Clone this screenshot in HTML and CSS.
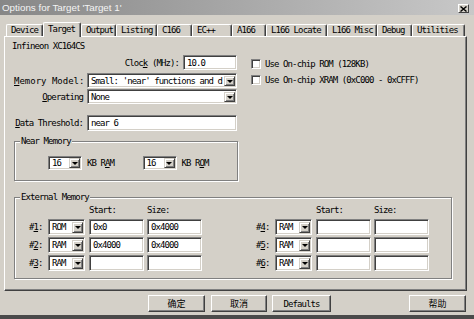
FILE: index.html
```html
<!DOCTYPE html>
<html>
<head>
<meta charset="utf-8">
<title>Options for Target</title>
<link rel="stylesheet" href="styles.css">
</head>
<body>
<div class="window">
  <div class="titlebar">
    <span class="title">Options for Target 'Target 1'</span>
    <span class="close"><svg width="7" height="6" viewBox="0 0 7 6"><path d="M0.5 0.5 L6.5 5.5 M6.5 0.5 L0.5 5.5" stroke="#000" stroke-width="1.4"/></svg></span>
  </div>
  <div class="tabs">
    <div class="tab">Device</div>
    <div class="tab active">Target</div>
    <div class="tab">Output</div>
    <div class="tab">Listing</div>
    <div class="tab">C166</div>
    <div class="tab">EC++</div>
    <div class="tab">A166</div>
    <div class="tab">L166 Locate</div>
    <div class="tab">L166 Misc</div>
    <div class="tab">Debug</div>
    <div class="tab">Utilities</div>
  </div>
  <div class="panel">
    <div class="chip">Infineon XC164CS</div>
    <div class="main">
      <div class="leftcol">
        <div class="row clock">
          <span class="clocklbl">Cloc<u>k</u> (MHz):</span>
          <div class="field clockin">10.0</div>
        </div>
        <div class="row mm">
          <span class="lbl wide"><u>M</u>emory Model:</span>
          <div class="select big"><span class="val">Small: 'near' functions and d</span><span class="btn"></span></div>
        </div>
        <div class="row op">
          <span class="lbl"><u>O</u>perating</span>
          <div class="select big"><span class="val">None</span><span class="btn"></span></div>
        </div>
        <div class="row dt">
          <span class="lbl"><u>D</u>ata Threshold:</span>
          <div class="field big">near 6</div>
        </div>
        <fieldset class="group near">
          <legend>Near Memory</legend>
          <div class="nearrow">
            <div class="pair"><div class="select small"><span class="val">16</span><span class="btn"></span></div><span class="kb">KB R<u>A</u>M</span></div>
            <div class="pair"><div class="select small"><span class="val">16</span><span class="btn"></span></div><span class="kb">KB R<u>O</u>M</span></div>
          </div>
        </fieldset>
      </div>
      <div class="rightcol">
        <div class="check"><span class="box"></span>Use On-chip ROM (128KB)</div>
        <div class="check"><span class="box"></span>Use On-chip XRAM (0xC000 - 0xCFFF)</div>
      </div>
    </div>
    <fieldset class="group ext">
      <legend>External Memory</legend>
      <div class="halves">
        <div class="half">
          <span></span><span></span><span class="hdr">Start:</span><span class="hdr">Size:</span>
          <span class="num">#<u>1</u>:</span><div class="select mem"><span class="val">ROM</span><span class="btn"></span></div><div class="field cell">0x0</div><div class="field cell">0x4000</div>
          <span class="num">#<u>2</u>:</span><div class="select mem"><span class="val">RAM</span><span class="btn"></span></div><div class="field cell">0x4000</div><div class="field cell">0x4000</div>
          <span class="num">#<u>3</u>:</span><div class="select mem"><span class="val">RAM</span><span class="btn"></span></div><div class="field cell"></div><div class="field cell"></div>
        </div>
        <div class="half">
          <span></span><span></span><span class="hdr">Start:</span><span class="hdr">Size:</span>
          <span class="num">#<u>4</u>:</span><div class="select mem"><span class="val">RAM</span><span class="btn"></span></div><div class="field cell"></div><div class="field cell"></div>
          <span class="num">#<u>5</u>:</span><div class="select mem"><span class="val">RAM</span><span class="btn"></span></div><div class="field cell"></div><div class="field cell"></div>
          <span class="num">#<u>6</u>:</span><div class="select mem"><span class="val">RAM</span><span class="btn"></span></div><div class="field cell"></div><div class="field cell"></div>
        </div>
      </div>
    </fieldset>
  </div>
  <div class="buttons">
    <div class="button b-ok cjk">确定</div>
    <div class="button b-cancel cjk">取消</div>
    <div class="button b-def">Defaults</div>
    <div class="button b-help cjk">帮助</div>
  </div>
  <div class="strip"></div>
</div>
</body>
</html>
```

FILE: styles.css
```css
* { box-sizing: border-box; }

body {
  margin: 0;
  width: 474px;
  height: 319px;
  overflow: hidden;
  background: #d4d0c8;
  color: #000;
  font-family: "DejaVu Sans Mono", "Liberation Mono", monospace;
  font-size: 9px;
  letter-spacing: -0.9px;
}

u { text-decoration: underline; text-underline-offset: 1px; }

.window {
  display: flex;
  flex-direction: column;
  height: 319px;
}

/* title bar */
.titlebar {
  height: 15px;
  flex: none;
  display: flex;
  align-items: center;
  justify-content: space-between;
  padding: 0 5px 0 2px;
  background: linear-gradient(to right, #878787, #c8c8c8);
}
.title {
  font-family: "Liberation Sans", Arial, sans-serif;
  font-size: 9.8px;
  letter-spacing: 0;
  color: #f4f4f4;
}
.close {
  width: 11px;
  height: 9px;
  margin-top: 2px;
  display: flex;
  align-items: center;
  justify-content: center;
  background: #d4d0c8;
  border: 1px solid;
  border-color: #fff #404040 #404040 #fff;
}

/* tabs */
.tabs {
  flex: none;
  display: flex;
  align-items: flex-end;
  height: 14px;
  margin-top: 7px;
  padding-left: 6px;
}
.tab {
  height: 12px;
  line-height: 11px;
  padding-left: 4px;
  border-top: 1px solid #fff;
  border-left: 1px solid #fff;
  border-right: 1px solid #404040;
  box-shadow: inset -1px 0 #808080;
  border-radius: 2px 2px 0 0;
  white-space: nowrap;
}
.tab:nth-child(1) { width: 37px; }
.tab:nth-child(2) { width: 38px; }
.tab:nth-child(3) { width: 35px; }
.tab:nth-child(4) { width: 41px; }
.tab:nth-child(5) { width: 35px; }
.tab:nth-child(6) { width: 40px; }
.tab:nth-child(7) { width: 34px; }
.tab:nth-child(8) { width: 61px; }
.tab:nth-child(9) { width: 50px; }
.tab:nth-child(10) { width: 35px; }
.tab:nth-child(11) { width: 53px; }
.tab.active {
  height: 15px;
  margin-bottom: -1px;
  line-height: 12px;
  position: relative;
  z-index: 1;
  background: #d4d0c8;
}

/* panel */
.panel {
  flex: none;
  margin-left: 4px;
  width: 463px;
  height: 255px;
  border-top: 1px solid #fff;
  border-left: 1px solid #fff;
  border-right: 1px solid #404040;
  border-bottom: 1px solid #404040;
  box-shadow: inset -1px -1px #808080;
  padding: 4px 0 0 9px;
}
.chip {
  line-height: 10px;
  margin-left: -2px;
}

.main {
  display: flex;
  margin-top: 4px;
}
.leftcol {
  width: 223px;
  display: flex;
  flex-direction: column;
}
.row {
  display: flex;
  align-items: center;
  height: 15px;
}
.clock { justify-content: flex-end; }
.clocklbl { margin-right: 4px; }
.mm { margin-top: 3px; }
.op { margin-top: 1px; }
.dt { margin-top: 11px; height: 16px; }

.lbl {
  width: 73px;
  flex: none;
  text-align: right;
  padding-right: 4px;
  white-space: nowrap;
}
.lbl.wide { letter-spacing: 0; padding-right: 3px; }

/* sunken fields */
.field, .select {
  background: #fff;
  border: 1px solid;
  border-color: #808080 #fff #fff #808080;
  box-shadow: inset 1px 1px #404040, inset -1px -1px #d4d0c8;
  white-space: nowrap;
  overflow: hidden;
}
.field {
  padding-left: 3px;
  display: flex;
  align-items: center;
}
.clockin { width: 54px; height: 15px; }
.big { width: 150px; height: 15px; flex: none; }
.dt .big { height: 16px; }

.select {
  display: flex;
  align-items: stretch;
  padding: 2px 1px 1px 2px;
}
.val {
  flex: 1;
  min-width: 0;
  overflow: hidden;
  line-height: 10px;
  padding-left: 1px;
}
.btn {
  flex: none;
  width: 11px;
  background: #d4d0c8;
  border: 1px solid;
  border-color: #d4d0c8 #404040 #404040 #d4d0c8;
  box-shadow: inset 1px 1px #fff, inset -1px -1px #808080;
  display: flex;
  align-items: center;
  justify-content: center;
}
.btn::after {
  content: "";
  border-left: 3px solid transparent;
  border-right: 3px solid transparent;
  border-top: 3px solid #000;
}

/* group boxes */
.group {
  margin: 0;
  padding: 0;
  min-width: 0;
  border: 1px solid #808080;
  box-shadow: inset 1px 1px #fff, 1px 1px #fff;
}
.group legend {
  padding: 0 1px;
  margin-left: 5px;
  line-height: 10px;
  background: #d4d0c8;
}
.near {
  margin-top: 5px;
  width: 224px;
  padding-bottom: 10px;
}
.nearrow {
  display: flex;
  padding: 10px 0 0 33px;
}
.pair {
  width: 98px;
  display: flex;
  align-items: center;
}
.small { width: 34px; height: 14px; padding-top: 1px; }
.kb { margin-left: 5px; }

/* checkboxes */
.rightcol {
  margin-left: 14px;
  padding-top: 4px;
  display: flex;
  flex-direction: column;
  gap: 6px;
}
.check {
  display: flex;
  align-items: center;
  height: 10px;
  white-space: nowrap;
}
.box {
  width: 10px;
  height: 10px;
  margin-right: 4px;
  background: #fff;
  border: 1px solid;
  border-color: #808080 #fff #fff #808080;
  box-shadow: inset 1px 1px #404040, inset -1px -1px #d4d0c8;
}

/* external memory */
.ext {
  margin-top: 11px;
  width: 438px;
  padding-bottom: 7px;
}
.halves {
  display: flex;
  gap: 54px;
  padding: 3px 0 0 14px;
}
.half {
  display: grid;
  grid-template-columns: 19px 41px 58px 55px;
  grid-template-rows: 12px 16px 16px 16px;
  row-gap: 2px;
  align-items: center;
}
.hdr {
  line-height: 10px;
  align-self: start;
}
.mem { width: 37px; height: 16px; }
.cell { width: 55px; height: 16px; }
.num { white-space: nowrap; }

/* bottom buttons */
.buttons {
  flex: none;
  display: flex;
  height: 17px;
  margin-top: 4px;
  padding-left: 148px;
  padding-right: 8px;
}
.button {
  height: 17px;
  display: flex;
  align-items: center;
  justify-content: center;
  background: #d4d0c8;
  border: 1px solid;
  border-color: #fff #404040 #404040 #fff;
  box-shadow: inset -1px -1px #808080;
}
.cjk {
  font-family: "Noto Sans CJK SC", sans-serif;
  font-size: 9px;
  letter-spacing: 0;
}
.b-ok { width: 57px; }
.b-cancel { width: 56px; margin-left: 6px; }
.b-def { width: 59px; margin-left: 5px; }
.b-help { width: 57px; margin-left: auto; }

.strip {
  flex: none;
  margin-top: auto;
  height: 4px;
  background: #4a4a4a;
}
```
